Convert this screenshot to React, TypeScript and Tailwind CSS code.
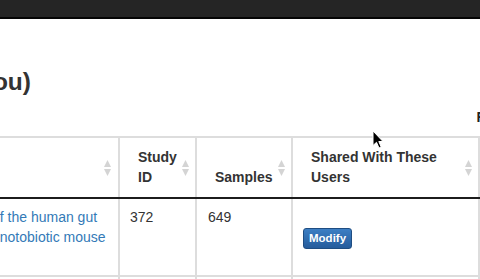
import React from "react"

function SortIcon() {
  return (
    <svg width="7" height="16" viewBox="0 0 7 16" className="shrink-0 self-center">
      <path d="M3.5 0 L7 7 L0 7 Z" fill="#d4d4d4" />
      <path d="M0 9 L7 9 L3.5 16 Z" fill="#d4d4d4" />
    </svg>
  )
}

function HeadCell({ children, pr = "pr-[6px]" }: { children?: React.ReactNode; pr?: string }) {
  return (
    <div className={`flex justify-between border-r-2 border-[#ddd] pl-[18px] ${pr}`}>
      <div className="self-end pt-[9px] pb-[10px] font-bold">{children}</div>
      <SortIcon />
    </div>
  )
}

function Cursor() {
  return (
    <svg
      width="12"
      height="19"
      viewBox="0 0 12 19"
      className="absolute left-[372px] top-[130px]"
    >
      <path
        d="M1 1 L1 15.5 L4.5 12.3 L7 18 L9.2 17 L6.8 11.5 L11 11.5 Z"
        fill="#000"
        stroke="#fff"
        strokeWidth="1"
        strokeLinejoin="round"
      />
    </svg>
  )
}

export default function App() {
  return (
    <div className="relative w-[480px] h-[279px] overflow-hidden bg-white text-[14px] leading-[20px] text-[#333] font-['Liberation_Sans',Arial,sans-serif]">
      {/* top bar */}
      <div className="h-[19px] bg-[#252525] border-b-2 border-[#050505]" />

      {/* heading, page is scrolled to the right */}
      <div className="mt-[43px] w-[31px] flex justify-end whitespace-nowrap">
        <h3 className="h-[40px] leading-[40px] text-[24.5px] font-bold">
          Your Studies (includes studies shared with you)
        </h3>
      </div>

      <div className="mt-[5px] h-[20px] flex justify-end">
        <span className="-mr-[5px] font-bold text-[#222]">F</span>
      </div>

      {/* table */}
      <div className="mt-[9px] grid grid-cols-[120px_77px_96px_187px] border-t-2 border-[#ddd]">
        <HeadCell pr="pr-[7px]" />
        <HeadCell>
          Study
          <br />
          ID
        </HeadCell>
        <HeadCell>Samples</HeadCell>
        <HeadCell>
          Shared With These
          <br />
          Users
        </HeadCell>

        <div className="col-span-4 h-[2px] bg-[#1c1c1c]" />

        <div className="h-[78px] border-r-2 border-b-2 border-[#ddd] pt-[8px] whitespace-nowrap">
          <a className="block -ml-[8px] text-[#337ab7]">
            of the human gut
            <br />
            gnotobiotic mouse
          </a>
        </div>
        <div className="h-[78px] border-r-2 border-b-2 border-[#ddd] pt-[8px] pl-[10px]">372</div>
        <div className="h-[78px] border-r-2 border-b-2 border-[#ddd] pt-[8px] pl-[11px]">649</div>
        <div className="h-[78px] border-r-2 border-b-2 border-[#ddd] pt-[8px] pl-[10px]">
          <div className="h-[20px]" />
          <button className="h-[21px] px-[5px] rounded-[3px] border border-[#1f4d82] bg-gradient-to-b from-[#3d7fc4] to-[#255c9c] text-white text-[11.5px] font-bold leading-[19px]">
            Modify
          </button>
        </div>

        <div className="h-[20px] border-r-2 border-[#ddd]" />
        <div className="h-[20px] border-r-2 border-[#ddd]" />
        <div className="h-[20px] border-r-2 border-[#ddd]" />
        <div className="h-[20px] border-r-2 border-[#ddd]" />
      </div>

      <Cursor />
    </div>
  )
}
